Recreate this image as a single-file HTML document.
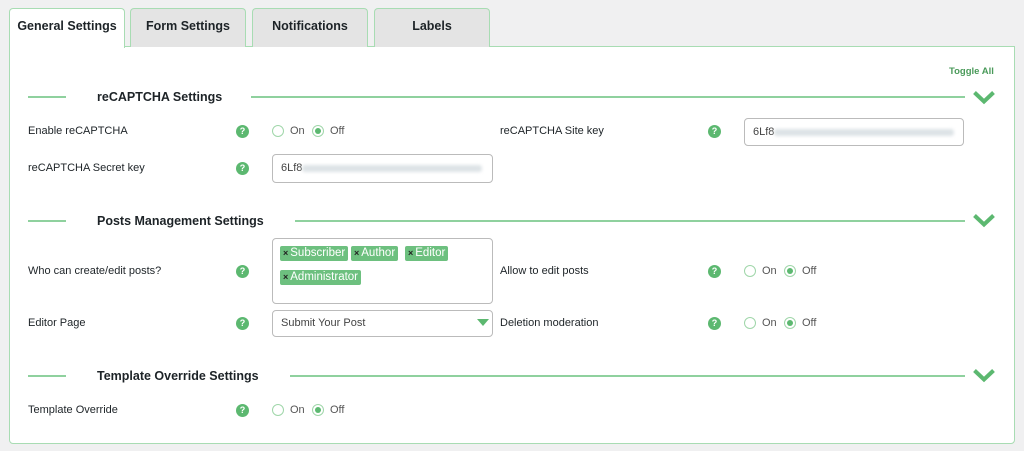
<!DOCTYPE html>
<html><head><style>
*{box-sizing:border-box;margin:0;padding:0}
body{width:1024px;height:451px;background:#f0f0f1;font-family:"Liberation Sans",sans-serif;color:#1d2327;position:relative;overflow:hidden;font-size:11px}
.a{position:absolute}
.tab{position:absolute;top:8px;height:39px;border:1px solid #a8dcb3;border-bottom:none;border-radius:4px 4px 0 0;background:#e4e4e4;font-weight:bold;font-size:12.5px;text-align:center;line-height:34px}
.panel{position:absolute;left:9px;top:46px;width:1006px;height:398px;background:#fff;border:1px solid #a8dcb3;border-radius:0 0 4px 4px}
.ln{position:absolute;height:2px;background:#8fd19e}
.h{position:absolute;font-weight:bold;font-size:12.5px}
.lab{position:absolute;font-size:11px;left:28px}
.q{position:absolute;width:13px;height:13px;border-radius:50%;background:#5cb870;color:#fff;font-size:9px;font-weight:bold;text-align:center;line-height:13px}
.r{position:absolute;width:12px;height:12px;border:1px solid #9fd6a9;border-radius:50%}
.r.on::after{content:"";position:absolute;left:2px;top:2px;width:6px;height:6px;border-radius:50%;background:#5cb870}
.t{position:absolute;font-size:11px;color:#555}
.inp{position:absolute;border:1px solid #bbb;border-radius:4px;background:#fff;font-size:11px;color:#444;padding-left:8px;white-space:nowrap;overflow:hidden}
.blur{display:inline-block;height:7px;background:#dde3e6;border-radius:3px;vertical-align:middle;filter:blur(1.5px)}
.tag{position:absolute;height:15px;background:#6dc07f;color:#fff;border-radius:2px;font-size:11.5px;line-height:15px;padding:0 3px}
.tag b{color:#222;font-size:9px;margin-right:2px}
</style></head><body>
<div class="panel"></div>
<div class="tab" style="left:9px;width:116px;background:#fff;height:40px;z-index:2">General Settings</div>
<div class="tab" style="left:130px;width:116px">Form Settings</div>
<div class="tab" style="left:252px;width:116px">Notifications</div>
<div class="tab" style="left:374px;width:116px">Labels</div>

<div class="a" style="left:949px;top:66px;font-size:9.5px;font-weight:bold;color:#4a9a5a">Toggle All</div>

<svg class="a" style="left:972px;top:89px" width="24" height="17"><path d="M2.5 3.5 L12 12.5 L21.5 3.5" stroke="#5cb870" stroke-width="4" fill="none"/></svg>
<svg class="a" style="left:972px;top:212px" width="24" height="17"><path d="M2.5 3.5 L12 12.5 L21.5 3.5" stroke="#5cb870" stroke-width="4" fill="none"/></svg>
<svg class="a" style="left:972px;top:367px" width="24" height="17"><path d="M2.5 3.5 L12 12.5 L21.5 3.5" stroke="#5cb870" stroke-width="4" fill="none"/></svg>

<div class="ln" style="left:28px;width:38px;top:96px"></div><div class="h" style="left:97px;top:90px">reCAPTCHA Settings</div><div class="ln" style="left:251px;width:714px;top:96px"></div>
<div class="ln" style="left:28px;width:38px;top:220px"></div><div class="h" style="left:97px;top:214px">Posts Management Settings</div><div class="ln" style="left:295px;width:670px;top:220px"></div>
<div class="ln" style="left:28px;width:38px;top:375px"></div><div class="h" style="left:97px;top:369px">Template Override Settings</div><div class="ln" style="left:290px;width:675px;top:375px"></div>

<div class="lab" style="top:125px">Enable reCAPTCHA</div>
<div class="q" style="left:236px;top:125px">?</div>
<div class="r" style="left:272px;top:125px"></div><div class="t" style="left:290px;top:125px">On</div>
<div class="r on" style="left:312px;top:125px"></div><div class="t" style="left:330px;top:125px">Off</div>

<div class="a" style="left:500px;top:125px;font-size:11px">reCAPTCHA Site key</div>
<div class="q" style="left:708px;top:125px">?</div>
<div class="inp" style="left:744px;top:118px;width:220px;height:28px;line-height:26px">6Lf8<span class="blur" style="width:180px"></span></div>

<div class="lab" style="top:162px">reCAPTCHA Secret key</div>
<div class="q" style="left:236px;top:162px">?</div>
<div class="inp" style="left:272px;top:154px;width:221px;height:29px;line-height:27px">6Lf8<span class="blur" style="width:180px"></span></div>

<div class="lab" style="top:265px">Who can create/edit posts?</div>
<div class="q" style="left:236px;top:265px">?</div>
<div class="inp" style="left:272px;top:238px;width:221px;height:66px"></div>
<div class="tag" style="left:280px;top:246px"><b>×</b>Subscriber</div>
<div class="tag" style="left:351px;top:246px"><b>×</b>Author</div>
<div class="tag" style="left:405px;top:246px"><b>×</b>Editor</div>
<div class="tag" style="left:280px;top:270px"><b>×</b>Administrator</div>

<div class="a" style="left:500px;top:265px">Allow to edit posts</div>
<div class="q" style="left:708px;top:265px">?</div>
<div class="r" style="left:744px;top:265px"></div><div class="t" style="left:762px;top:265px">On</div>
<div class="r on" style="left:784px;top:265px"></div><div class="t" style="left:802px;top:265px">Off</div>

<div class="lab" style="top:317px">Editor Page</div>
<div class="q" style="left:236px;top:317px">?</div>
<div class="inp" style="left:272px;top:310px;width:221px;height:27px;line-height:25px">Submit Your Post</div>
<svg class="a" style="left:477px;top:319px" width="12" height="8"><path d="M0 0H12L6 7Z" fill="#5cb870"/></svg>

<div class="a" style="left:500px;top:317px">Deletion moderation</div>
<div class="q" style="left:708px;top:317px">?</div>
<div class="r" style="left:744px;top:317px"></div><div class="t" style="left:762px;top:317px">On</div>
<div class="r on" style="left:784px;top:317px"></div><div class="t" style="left:802px;top:317px">Off</div>

<div class="lab" style="top:404px">Template Override</div>
<div class="q" style="left:236px;top:404px">?</div>
<div class="r" style="left:272px;top:404px"></div><div class="t" style="left:290px;top:404px">On</div>
<div class="r on" style="left:312px;top:404px"></div><div class="t" style="left:330px;top:404px">Off</div>
</body></html>
